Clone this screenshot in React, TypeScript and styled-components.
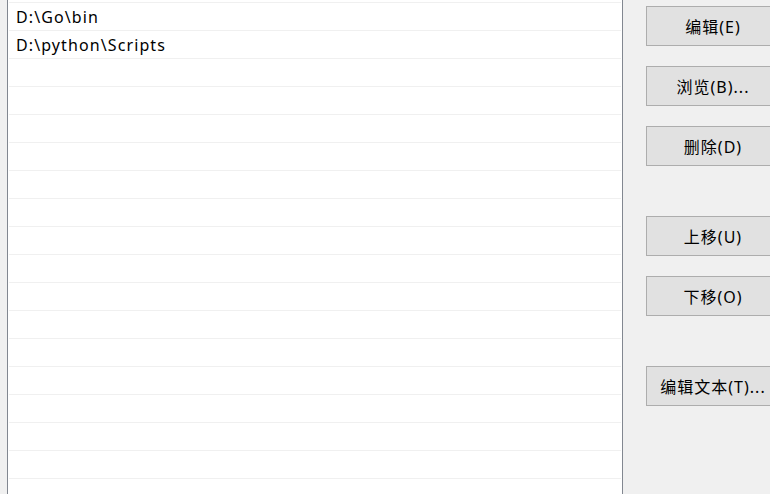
import React from "react";
import styled, { createGlobalStyle } from "styled-components";

const Global = createGlobalStyle`
  html, body { margin: 0; padding: 0; background: #f0f0f0; }
  body { width: 770px; height: 494px; overflow: hidden; font-family: "Noto Sans", "Noto Sans CJK SC", sans-serif; }
  #root { height: 100%; }
`;

const Page = styled.div`
  display: flex;
  height: 494px;
  padding-left: 7px;
  box-sizing: border-box;
  background: #f0f0f0;
`;

const List = styled.div`
  width: 616px;
  height: 100%;
  box-sizing: border-box;
  background: #fff;
  border-left: 1px solid #828790;
  border-right: 1px solid #828790;
  padding: 2px 1px 0 1px;
  overflow: hidden;
  display: flex;
  flex-direction: column;
  flex-shrink: 0;
`;

const Row = styled.div`
  height: 28px;
  flex-shrink: 0;
  box-sizing: border-box;
  border-top: 1px solid #f0f0f0;
  padding-left: 7px;
  display: flex;
  align-items: center;
  font-size: 16px;
  letter-spacing: 1.1px;
  color: #000;
  line-height: 1;
`;

const Side = styled.div`
  display: flex;
  flex-direction: column;
  padding: 6px 0 0 23px;
  gap: 20px;
`;

const Button = styled.div<{ $gapAfter?: boolean }>`
  width: 134px;
  height: 40px;
  box-sizing: border-box;
  border: 1px solid #adadad;
  background: #e1e1e1;
  display: flex;
  align-items: center;
  justify-content: center;
  font-size: 16px;
  letter-spacing: 1px;
  color: #000;
  white-space: nowrap;
  flex-shrink: 0;
  margin-bottom: ${(p) => (p.$gapAfter ? "30px" : "0")};
`;

const entries = ["D:\\Go\\bin", "D:\\python\\Scripts"];

export default function App() {
  const rows = Array.from({ length: 18 }, (_, i) => entries[i] ?? "");
  return (
    <>
      <Global />
      <Page>
        <List>
          {rows.map((t, i) => (
            <Row key={i}>{t}</Row>
          ))}
        </List>
        <Side>
          <Button>编辑(E)</Button>
          <Button>浏览(B)...</Button>
          <Button $gapAfter>删除(D)</Button>
          <Button>上移(U)</Button>
          <Button $gapAfter>下移(O)</Button>
          <Button>编辑文本(T)...</Button>
        </Side>
      </Page>
    </>
  );
}
